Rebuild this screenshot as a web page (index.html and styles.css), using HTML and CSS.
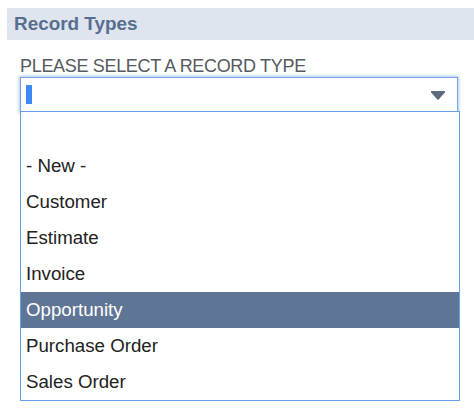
FILE: index.html
```html
<!DOCTYPE html>
<html>
<head>
<meta charset="utf-8">
<link rel="stylesheet" href="styles.css">
</head>
<body>
<div class="panel">
  <div class="panel-header">Record Types</div>
  <div class="field">
    <div class="field-label">PLEASE SELECT A RECORD TYPE</div>
    <div class="select">
      <span class="caret"></span>
      <svg class="arrow" width="16" height="9" viewBox="0 0 16 9"><path d="M1 1.2 Q0.4 0 1.8 0 H14.2 Q15.6 0 15 1.2 L8.9 8.2 Q8 9.2 7.1 8.2 Z" fill="#5b6b80"/></svg>
    </div>
    <ul class="options">
      <li class="option"></li>
      <li class="option">- New -</li>
      <li class="option">Customer</li>
      <li class="option">Estimate</li>
      <li class="option">Invoice</li>
      <li class="option selected">Opportunity</li>
      <li class="option">Purchase Order</li>
      <li class="option">Sales Order</li>
    </ul>
  </div>
</div>
</body>
</html>
```

FILE: styles.css
```css
html, body {
  margin: 0;
  padding: 0;
  background: #ffffff;
}
body {
  font-family: "Liberation Sans", Arial, sans-serif;
}
.panel {
  padding: 8px 0 0 7px;
}
.panel-header {
  height: 32px;
  line-height: 32px;
  background: #dee5ee;
  color: #586e90;
  font-weight: bold;
  font-size: 18.9px;
  padding-left: 7px;
}
.field {
  padding-left: 13px;
  margin-top: 15px;
}
.field-label {
  font-size: 18px;
  line-height: 22px;
  color: #555a60;
  letter-spacing: -0.32px;
}
.select {
  box-sizing: border-box;
  width: 438px;
  height: 35px;
  border: 1px solid #79a6e2;
  box-shadow: 0 0 3px 1px #a9c8f0;
  position: relative;
  display: flex;
  align-items: center;
  justify-content: space-between;
  padding: 0 11px 0 5px;
}
.caret {
  display: block;
  width: 6px;
  height: 19px;
  background: #3d8af5;
}
.arrow {
  display: block;
  margin-top: 1px;
}
.options {
  list-style: none;
  margin: 0;
  padding: 0;
  box-sizing: border-box;
  width: 440px;
  border: 1px solid #6aa0e2;
  margin-top: -1px;
  position: relative;
  background: #fff;
}
.option {
  height: 36px;
  line-height: 36px;
  font-size: 18.7px;
  color: #222222;
  padding-left: 5px;
}
.option.selected {
  background: #5f7596;
  color: #ffffff;
}
```
